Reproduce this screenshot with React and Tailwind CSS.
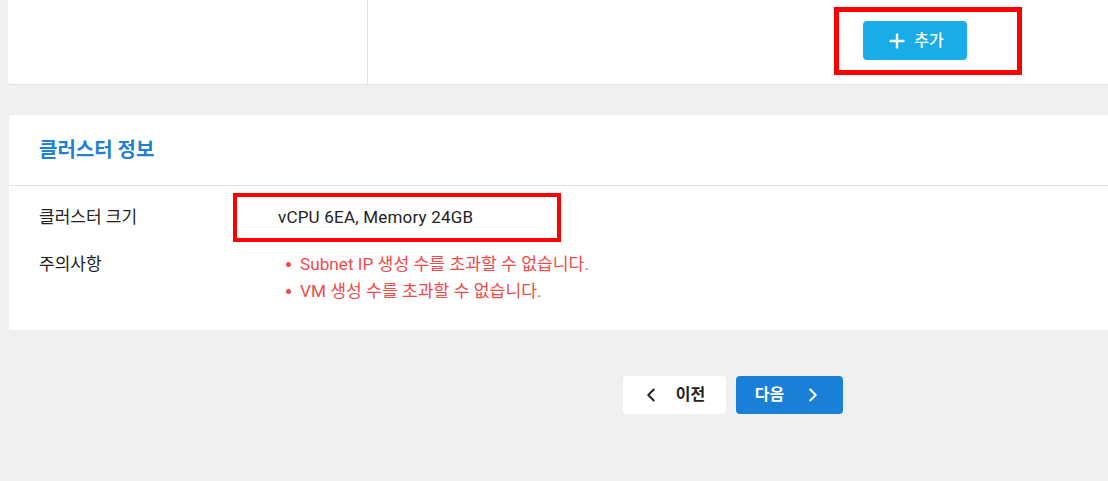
import React from "react";
import { ChevronLeft, ChevronRight, Plus } from "lucide-react";

const font = { fontFamily: '"Roboto", "Noto Sans CJK KR", sans-serif' };

const App = () => {
  return (
    <div
      className="w-[1108px] h-[481px] overflow-hidden bg-[#f0f0f0] pl-2"
      style={font}
    >
      {/* 상단 카드 */}
      <div className="w-[1120px] h-[85px] bg-white rounded-bl border-b border-[#e3e3e3] flex">
        <div className="w-[360px] border-r border-[#e3e3e3]" />
        <div className="flex-1">
          <div className="ml-[466px] mt-[7px] w-[188px] h-[68px] border-[5px] border-[#ff0000] pl-6 pt-[9px]">
            <button className="w-[104px] h-[39px] rounded-sm bg-[#19ace6] text-white text-[16px] font-medium flex items-center justify-center gap-[6px]">
              <Plus size={22} strokeWidth={2.6} />
              <span>추가</span>
            </button>
          </div>
        </div>
      </div>

      {/* 클러스터 정보 */}
      <div className="mt-[30px] ml-px w-[1120px] h-[215px] bg-white rounded-tl">
        <div className="h-[71px] border-b border-[#e3e3e3] pl-[30px] flex items-center">
          <h2 className="text-[20px] font-bold text-[#1f7fd6]">클러스터 정보</h2>
        </div>
        <div className="pt-[7px] pl-[30px]">
          <div className="flex items-center">
            <div className="w-[194px] text-[17px] text-[#222]">클러스터 크기</div>
            <div className="w-[328px] h-[49px] border-4 border-[#ff0000] pl-[41px] flex items-center text-[17px] tracking-[0.2px] text-[#222]">
              vCPU 6EA, Memory 24GB
            </div>
          </div>
          <div className="flex mt-[9px]">
            <div className="w-[247px] text-[17px] text-[#222] leading-[27px]">주의사항</div>
            <ul className="text-[17.2px] text-[#f04a4a] leading-[27px]">
              <li className="flex items-center">
                <span className="w-[5px] h-[5px] rounded-full bg-[#f04a4a] mr-[9px]" />
                Subnet IP 생성 수를 초과할 수 없습니다.
              </li>
              <li className="flex items-center">
                <span className="w-[5px] h-[5px] rounded-full bg-[#f04a4a] mr-[9px]" />
                VM 생성 수를 초과할 수 없습니다.
              </li>
            </ul>
          </div>
        </div>
      </div>

      {/* 이전 / 다음 */}
      <div className="mt-[46px] pl-[615px] flex gap-[10px]">
        <button className="w-[103px] h-[38px] rounded-sm bg-white text-[#222] text-[16px] font-bold flex items-center justify-center gap-[14px] pr-1">
          <ChevronLeft size={22} strokeWidth={2.2} />
          <span>이전</span>
        </button>
        <button className="w-[107px] h-[38px] rounded-sm bg-[#1a7fd7] text-white text-[16px] font-bold flex items-center justify-center gap-[18px]">
          <span>다음</span>
          <ChevronRight size={22} strokeWidth={2.2} />
        </button>
      </div>
    </div>
  );
};

export default App;
